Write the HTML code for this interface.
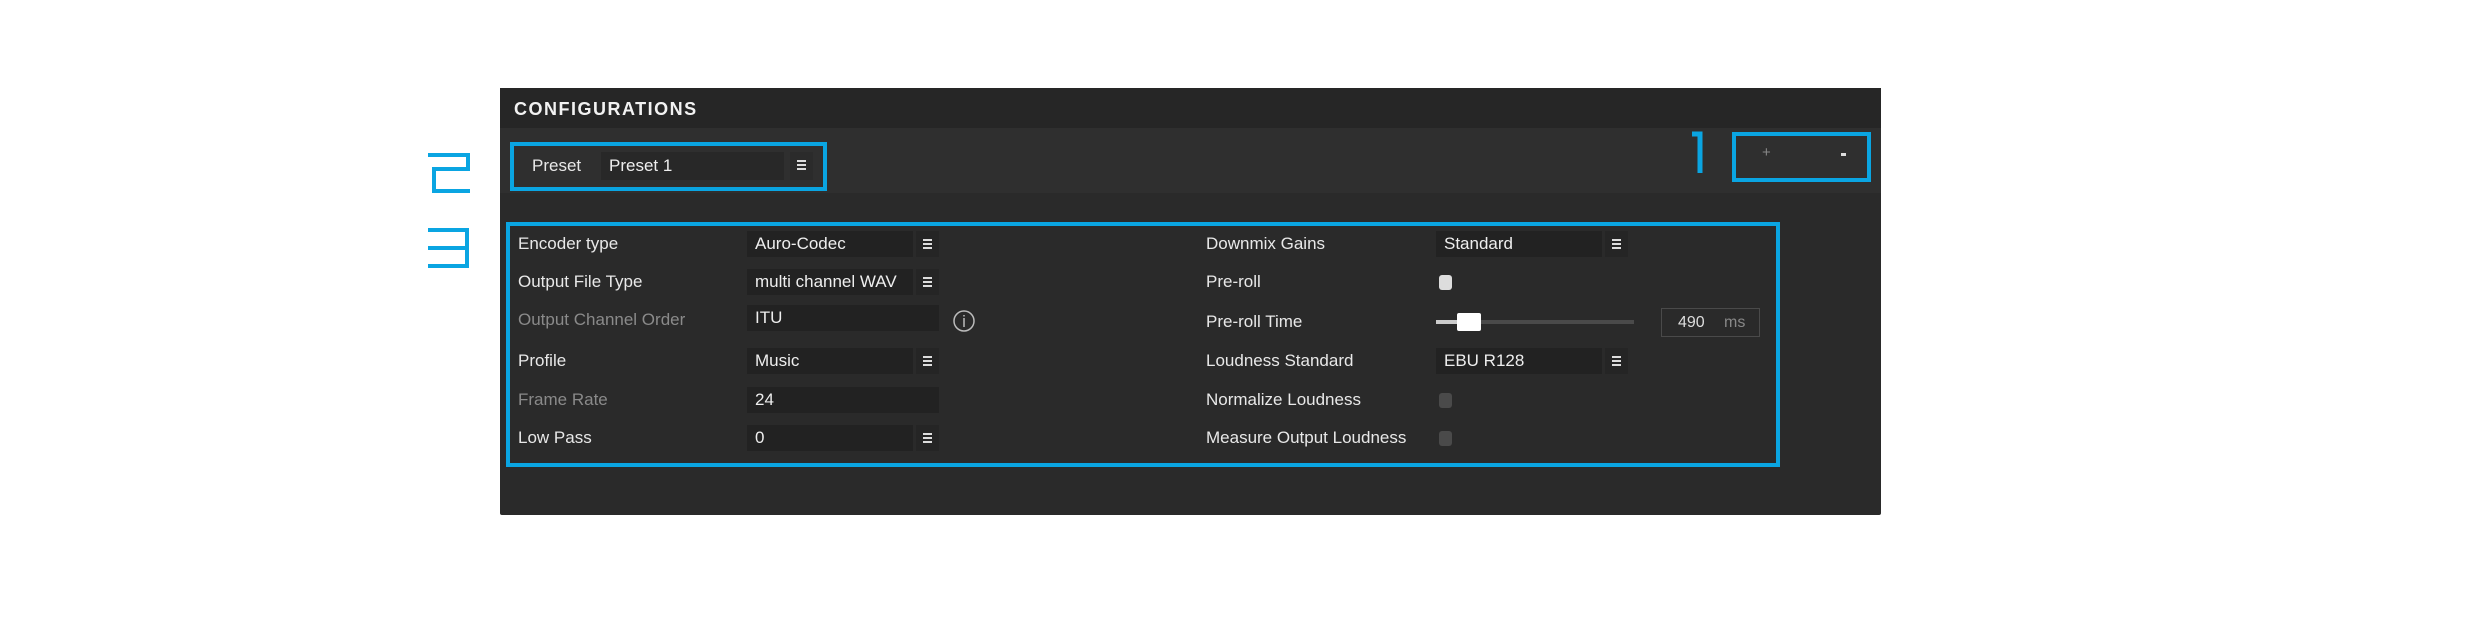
<!DOCTYPE html>
<html><head><meta charset="utf-8"><style>
*{margin:0;padding:0;box-sizing:border-box}
body{width:2482px;height:637px;background:#fff;position:relative;overflow:hidden;font-family:"Liberation Sans",sans-serif;}
.a{position:absolute}
.panel{left:500px;top:88px;width:1381px;height:427px;background:#2a2a2a;border-radius:2px}
.hdr{left:500px;top:88px;width:1381px;height:40px;background:#262626}
.band{left:500px;top:128px;width:1381px;height:65px;background:#2f2f2f}
.t{position:absolute;font-size:17px;color:#e8e8e8;white-space:nowrap;line-height:20px}
.dim{color:#8a8a8a}
.f{position:absolute;height:26px;background:#222;color:#eee;font-size:17px;line-height:26px;padding-left:8px;white-space:nowrap}
.m{position:absolute;height:26px;width:23px;background:#252525}
.m:after{content:"";position:absolute;left:7px;top:8px;width:9px;height:2px;background:#ddd;box-shadow:0 4px 0 #ddd,0 8px 0 #ddd}
.blue{position:absolute;border:4px solid #0aa5e2}
.cb{position:absolute;width:13px;height:15px;border-radius:3px;background:#4a4a4a}
</style></head><body>
<div class="a panel"></div><div class="a hdr"></div><div class="a band"></div>
<div class="t" style="left:514px;top:99px;font-size:18px;font-weight:bold;letter-spacing:1.5px;color:#f2f2f2">CONFIGURATIONS</div>

<svg class="a" style="left:0;top:0" width="2482" height="637">
<path d="M428 155H468V169H434V191H470" fill="none" stroke="#0aa5e2" stroke-width="4"/>
<path d="M428 230H467V266H428M428 248H467" fill="none" stroke="#0aa5e2" stroke-width="4"/>
<path d="M1692 134H1700V173" fill="none" stroke="#0aa5e2" stroke-width="5"/>
<circle cx="964" cy="321" r="10" fill="none" stroke="#bbb" stroke-width="1.5"/>
<path d="M964 315v1.5M964 318v9" stroke="#bbb" stroke-width="1.5"/>
</svg>

<div class="blue" style="left:510px;top:142px;width:317px;height:49px"></div>
<div class="t" style="left:532px;top:156px">Preset</div>
<div class="f" style="left:601px;top:152px;width:183px;height:28px;line-height:28px;background:#282828">Preset 1</div>
<div class="m" style="left:790px;top:152px;height:28px;background:#2b2b2b"></div>

<div class="blue" style="left:1732px;top:132px;width:139px;height:50px"></div>
<div class="t" style="left:1762px;top:143px;color:#888;font-size:15px">+</div>
<div class="a" style="left:1841px;top:153px;width:5px;height:3px;background:#ddd"></div>

<div class="blue" style="left:506px;top:222px;width:1274px;height:245px"></div>

<div class="t" style="left:518px;top:234px">Encoder type</div>
<div class="t" style="left:518px;top:272px">Output File Type</div>
<div class="t dim" style="left:518px;top:310px">Output Channel Order</div>
<div class="t" style="left:518px;top:351px">Profile</div>
<div class="t dim" style="left:518px;top:390px">Frame Rate</div>
<div class="t" style="left:518px;top:428px">Low Pass</div>

<div class="f" style="left:747px;top:231px;width:166px">Auro-Codec</div><div class="m" style="left:916px;top:231px"></div>
<div class="f" style="left:747px;top:269px;width:166px">multi channel WAV</div><div class="m" style="left:916px;top:269px"></div>
<div class="f" style="left:747px;top:305px;width:192px">ITU</div>
<div class="f" style="left:747px;top:348px;width:166px">Music</div><div class="m" style="left:916px;top:348px"></div>
<div class="f" style="left:747px;top:387px;width:192px">24</div>
<div class="f" style="left:747px;top:425px;width:166px">0</div><div class="m" style="left:916px;top:425px"></div>

<div class="t" style="left:1206px;top:234px">Downmix Gains</div>
<div class="t" style="left:1206px;top:272px">Pre-roll</div>
<div class="t" style="left:1206px;top:312px">Pre-roll Time</div>
<div class="t" style="left:1206px;top:351px">Loudness Standard</div>
<div class="t" style="left:1206px;top:390px">Normalize Loudness</div>
<div class="t" style="left:1206px;top:428px">Measure Output Loudness</div>

<div class="f" style="left:1436px;top:231px;width:166px">Standard</div><div class="m" style="left:1605px;top:231px"></div>
<div class="cb" style="left:1439px;top:275px;background:#ddd"></div>
<div class="a" style="left:1436px;top:320px;width:198px;height:4px;background:#4a4a4a"></div>
<div class="a" style="left:1436px;top:320px;width:25px;height:4px;background:#ccc"></div>
<div class="a" style="left:1457px;top:313px;width:24px;height:18px;background:#fff;border-radius:2px"></div>
<div class="a" style="left:1661px;top:308px;width:99px;height:29px;border:1px solid #4a4a4a"></div>
<div class="t" style="left:1678px;top:313px;font-size:16px;color:#ddd">490</div>
<div class="t" style="left:1724px;top:313px;font-size:16px;color:#888">ms</div>
<div class="f" style="left:1436px;top:348px;width:166px">EBU R128</div><div class="m" style="left:1605px;top:348px"></div>
<div class="cb" style="left:1439px;top:393px"></div>
<div class="cb" style="left:1439px;top:431px"></div>
</body></html>
